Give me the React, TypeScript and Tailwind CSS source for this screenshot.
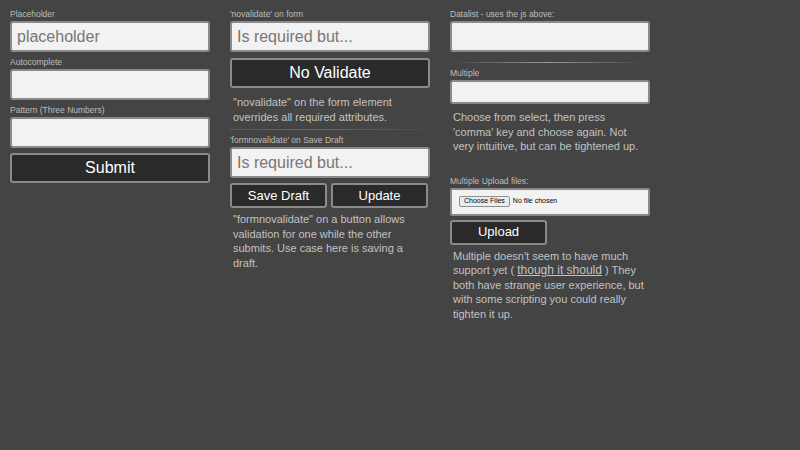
import React from "react";

function Label({ children }: { children: React.ReactNode }) {
  return (
    <label className="block pt-[5px] pb-[2px] text-[8.5px] leading-[10px] text-[#bdbdbd]">
      {children}
    </label>
  );
}

function TextInput({ placeholder, tall = true }: { placeholder?: string; tall?: boolean }) {
  return (
    <input
      type="text"
      placeholder={placeholder}
      className={`block w-[200px] ${
        tall ? "h-[31px]" : "h-[24px]"
      } rounded-[3px] border-2 border-[#8a8a8a] bg-[#f2f2f2] px-[5px] text-[16px] text-[#333] placeholder:text-[#777] outline-none`}
    />
  );
}

function Note({ children, className = "" }: { children: React.ReactNode; className?: string }) {
  return (
    <p className={`pl-[3px] pr-[4px] text-[11px] leading-[14.5px] text-[#c2c2c2] ${className}`}>
      {children}
    </p>
  );
}

export default function App() {
  return (
    <div className="min-h-screen w-full bg-[#444] font-['Liberation_Sans',Arial,sans-serif]">
      <div className="flex gap-[20px] px-[10px] pt-[4px]">
        {/* Column 1 */}
        <form className="w-[200px]">
          <Label>Placeholder</Label>
          <TextInput placeholder="placeholder" />
          <Label>Autocomplete</Label>
          <TextInput />
          <Label>Pattern (Three Numbers)</Label>
          <TextInput />
          <button
            type="button"
            className="mt-[5px] block h-[30px] w-[200px] rounded-[3px] border-2 border-[#8a8a8a] bg-[#2a2a2a] text-[16px] text-white"
          >
            Submit
          </button>
        </form>

        {/* Column 2 */}
        <div className="w-[200px]">
          <Label>'novalidate' on form</Label>
          <TextInput placeholder="Is required but..." />
          <button
            type="button"
            className="mt-[6px] block h-[30px] w-[200px] rounded-[3px] border-2 border-[#8a8a8a] bg-[#2a2a2a] text-[16px] text-white"
          >
            No Validate
          </button>
          <Note className="mt-[7px]">
            "novalidate" on the form element overrides all required attributes.
          </Note>
          <div className="mt-[5px] h-px w-[196px] bg-linear-to-r from-[#5c5c5c] via-[#666] to-[#4a4a4a]" />
          <Label>'formnovalidate' on Save Draft</Label>
          <TextInput placeholder="Is required but..." />
          <div className="mt-[5px] flex gap-[4px]">
            <button
              type="button"
              className="h-[25px] w-[97px] rounded-[3px] border-2 border-[#8a8a8a] bg-[#2a2a2a] text-[13px] text-white"
            >
              Save Draft
            </button>
            <button
              type="button"
              className="h-[25px] w-[97px] rounded-[3px] border-2 border-[#8a8a8a] bg-[#2a2a2a] text-[13px] text-white"
            >
              Update
            </button>
          </div>
          <Note className="mt-[4px]">
            "formnovalidate" on a button allows validation for one while the other submits. Use
            case here is saving a draft.
          </Note>
        </div>

        {/* Column 3 */}
        <div className="w-[200px]">
          <Label>Datalist - uses the js above:</Label>
          <TextInput />
          <div className="mt-[10px] h-px w-[196px] bg-linear-to-r from-transparent via-[#9a9a9a] to-transparent" />
          <Label>Multiple</Label>
          <TextInput tall={false} />
          <Note className="mt-[6px]">
            Choose from select, then press 'comma' key and choose again. Not very intuitive, but
            can be tightened up.
          </Note>
          <div className="mt-[17px]">
            <Label>Multiple Upload files:</Label>
          </div>
          <div className="flex h-[28px] w-[200px] items-center rounded-[2px] border-2 border-[#8a8a8a] bg-[#f2f2f2] pl-[7px]">
            <span className="flex h-[11px] items-center rounded-[2px] border border-[#8f8f8f] bg-[#ececec] px-[4px] text-[7px] text-black">
              Choose Files
            </span>
            <span className="ml-[3px] text-[7px] text-black">No file chosen</span>
          </div>
          <button
            type="button"
            className="mt-[4px] block h-[25px] w-[97px] rounded-[3px] border-2 border-[#8a8a8a] bg-[#2a2a2a] text-[13px] text-white"
          >
            Upload
          </button>
          <Note className="mt-[4px]">
            Multiple doesn't seem to have much support yet ({" "}
            <a href="#" className="text-[12px] leading-[14.5px] text-[#c2c2c2] underline">
              though it should
            </a>{" "}
            ) They both have strange user experience, but with some scripting you could really
            tighten it up.
          </Note>
        </div>
      </div>
    </div>
  );
}
